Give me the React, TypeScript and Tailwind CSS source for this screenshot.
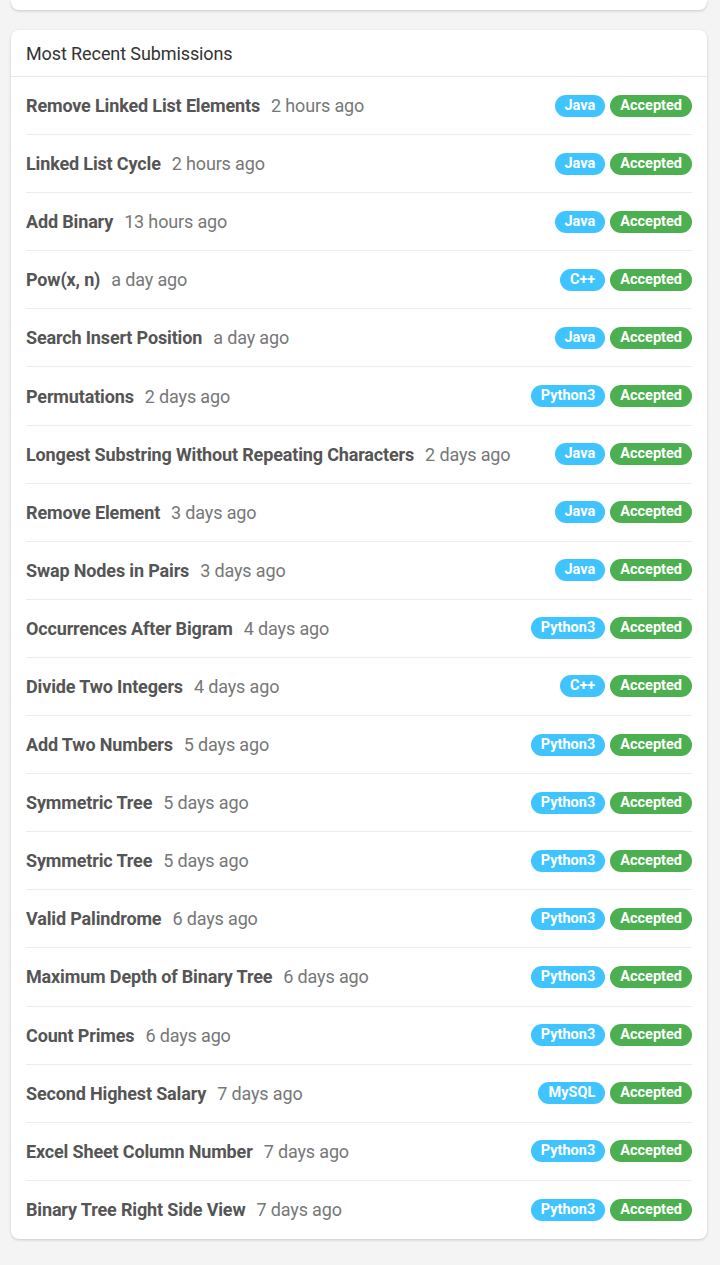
import React from 'react';

type Submission = { title: string; time: string; lang: string };

const SUBMISSIONS: Submission[] = [
    { title: 'Remove Linked List Elements', time: '2 hours ago', lang: 'Java' },
    { title: 'Linked List Cycle', time: '2 hours ago', lang: 'Java' },
    { title: 'Add Binary', time: '13 hours ago', lang: 'Java' },
    { title: 'Pow(x, n)', time: 'a day ago', lang: 'C++' },
    { title: 'Search Insert Position', time: 'a day ago', lang: 'Java' },
    { title: 'Permutations', time: '2 days ago', lang: 'Python3' },
    { title: 'Longest Substring Without Repeating Characters', time: '2 days ago', lang: 'Java' },
    { title: 'Remove Element', time: '3 days ago', lang: 'Java' },
    { title: 'Swap Nodes in Pairs', time: '3 days ago', lang: 'Java' },
    { title: 'Occurrences After Bigram', time: '4 days ago', lang: 'Python3' },
    { title: 'Divide Two Integers', time: '4 days ago', lang: 'C++' },
    { title: 'Add Two Numbers', time: '5 days ago', lang: 'Python3' },
    { title: 'Symmetric Tree', time: '5 days ago', lang: 'Python3' },
    { title: 'Symmetric Tree', time: '5 days ago', lang: 'Python3' },
    { title: 'Valid Palindrome', time: '6 days ago', lang: 'Python3' },
    { title: 'Maximum Depth of Binary Tree', time: '6 days ago', lang: 'Python3' },
    { title: 'Count Primes', time: '6 days ago', lang: 'Python3' },
    { title: 'Second Highest Salary', time: '7 days ago', lang: 'MySQL' },
    { title: 'Excel Sheet Column Number', time: '7 days ago', lang: 'Python3' },
    { title: 'Binary Tree Right Side View', time: '7 days ago', lang: 'Python3' },
];

const Badge: React.FC<{ color: string; children: React.ReactNode }> = ({ color, children }) => (
    <span className={`${color} text-white text-[14.5px] font-bold leading-[22px] h-[22px] px-[10px] rounded-full`}>
        {children}
    </span>
);

const App: React.FC = () => {
    return (
        <div className="min-h-[1265px] bg-[#f4f4f4] pl-[11px] pr-[13px] font-['Roboto',sans-serif]">
            {/* previous card, only its bottom edge is visible */}
            <div className="h-[10px] bg-white rounded-b-[8px] shadow-[0_1px_3px_rgba(0,0,0,0.18)]" />

            <div className="mt-[20px] bg-white rounded-[8px] shadow-[0_1px_3px_rgba(0,0,0,0.18)]">
                <div className="h-[47px] px-[15px] flex items-center border-b border-[#e8e8e8] text-[18px] tracking-[-0.1px] text-[#333]">
                    Most Recent Submissions
                </div>
                <div className="px-[15px]">
                    {SUBMISSIONS.map((s, i) => (
                        <div
                            key={i}
                            className={`h-[58.1px] flex items-center justify-between ${i < SUBMISSIONS.length - 1 ? 'border-b border-[#ececec]' : ''}`}
                        >
                            <div className="flex items-center gap-[11px] text-[18px] tracking-[-0.15px]">
                                <span className="font-bold text-[#555]">{s.title}</span>
                                <span className="text-[#777]">{s.time}</span>
                            </div>
                            <div className="flex items-center gap-[5px]">
                                <Badge color="bg-[#40c4ff]">{s.lang}</Badge>
                                <Badge color="bg-[#4caf50]">Accepted</Badge>
                            </div>
                        </div>
                    ))}
                </div>
            </div>
        </div>
    );
};

export default App;
